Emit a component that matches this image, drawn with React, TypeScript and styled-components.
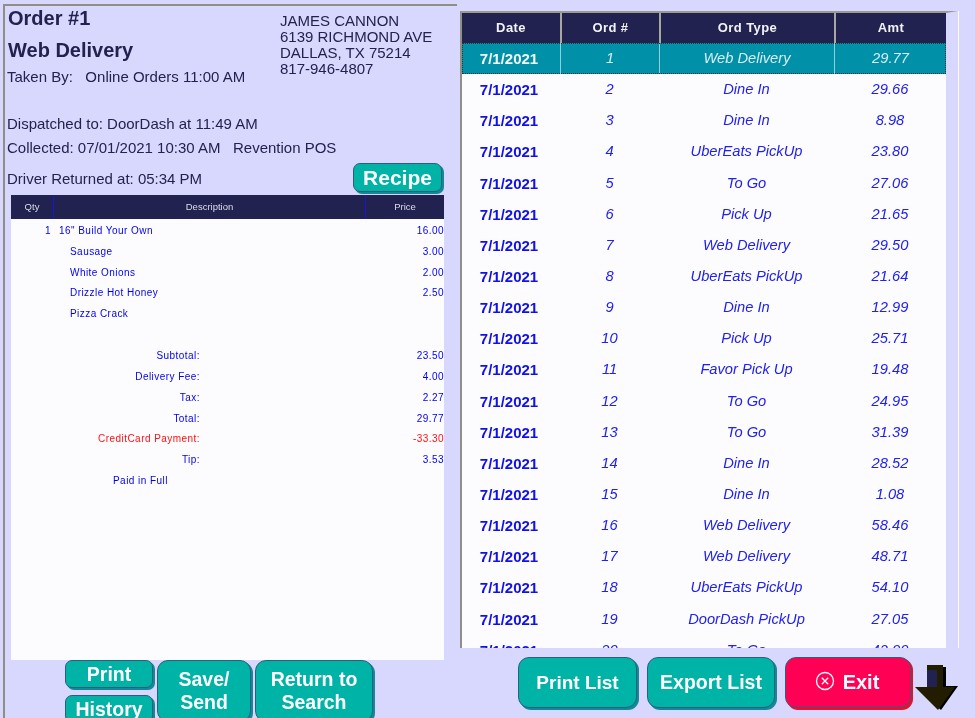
import React from 'react'
import styled, { createGlobalStyle } from 'styled-components'

const LAVENDER = '#d8d8ff'
const NAVY = '#222250'
const TEAL = '#00b3a7'
const BLUE = '#0000f0'

const GlobalStyle = createGlobalStyle`
  html, body {
    margin: 0;
    padding: 0;
    background: ${LAVENDER};
    font-family: "Liberation Sans", Arial, sans-serif;
  }
`

const Screen = styled.div`
  width: 975px;
  height: 718px;
  overflow: hidden;
  display: grid;
  grid-template-columns: 457px 518px;
  background: ${LAVENDER};
  filter: blur(0.35px);
`

const LeftPanel = styled.div`
  height: 714px;
  margin: 4px 0 0 3px;
  border-top: 2px solid #8f8f86;
  border-left: 2px solid #8f8f86;
  box-sizing: border-box;
  padding: 0 0 0 2px;
  display: flex;
  flex-direction: column;

  > * {
    flex: none;
  }
`

const TopInfo = styled.div`
  height: 85px;
  display: flex;
  color: ${NAVY};
`

const Titles = styled.div`
  width: 272px;
  padding-left: 1px;
`

const OrderTitle = styled.div`
  font-size: 20px;
  font-weight: 700;
  line-height: 24px;
`

const TypeTitle = styled.div`
  font-size: 20px;
  font-weight: 700;
  line-height: 24px;
  margin-top: 8px;
`

const Address = styled.div`
  font-size: 15px;
  line-height: 16px;
  padding-top: 7px;
`

const InfoLine = styled.div<{ $top?: number; $bottom?: number; $left?: number }>`
  font-size: 15px;
  line-height: 16px;
  color: ${NAVY};
  margin-top: ${props => props.$top ?? 0}px;
  margin-bottom: ${props => props.$bottom ?? 0}px;
  margin-left: ${props => props.$left ?? 0}px;
  white-space: pre;
`

const DriverRow = styled.div`
  display: flex;
  align-items: flex-end;
  justify-content: space-between;
  height: 40px;
  margin-top: -1px;
  padding-bottom: 3px;
  box-sizing: border-box;
  width: 435px;
`

const Button = styled.div<{ $w: number; $h: number; $size: number; $red?: boolean }>`
  width: ${props => props.$w}px;
  height: ${props => props.$h}px;
  flex: none;
  box-sizing: border-box;
  border-radius: ${props => (props.$h > 40 ? 11 : 7)}px;
  border: 1px solid #2e5f78;
  background: ${props => (props.$red ? '#ff0055' : TEAL)};
  box-shadow: 2px 2px 0 ${props => (props.$red ? '#e8102a' : '#12889a')};
  color: #fff;
  font-size: ${props => props.$size}px;
  font-weight: 700;
  line-height: 23px;
  display: flex;
  align-items: center;
  justify-content: center;
  text-align: center;
`

const Receipt = styled.div`
  width: 433px;
  height: 465px;
  margin-left: 4px;
  background: #fcfcff;
  color: ${BLUE};
`

const ReceiptHead = styled.div`
  display: grid;
  grid-template-columns: 42px 312px 79px;
  height: 24px;
  background: ${NAVY};
  color: #dcdcec;
  font-size: 9.5px;
  line-height: 24px;
  text-align: center;
  margin-bottom: 1px;
`

const HeadCell = styled.div`
  border-left: 1px solid #1818d0;
  &:first-child {
    border-left: 0;
  }
`

const ReceiptRow = styled.div<{ $red?: boolean }>`
  height: 20.85px;
  display: flex;
  align-items: center;
  font-size: 10px;
  letter-spacing: 0.45px;
  color: ${props => (props.$red ? '#ff1010' : BLUE)};
`

const Qty = styled.div`
  width: 40px;
  text-align: right;
  flex: none;
`

const Item = styled.div<{ $indent: number }>`
  margin-left: ${props => props.$indent}px;
  flex: 1;
`

const TotalLabel = styled.div`
  width: 189px;
  text-align: right;
  flex: none;
`

const RowAmt = styled.div`
  margin-left: auto;
  text-align: right;
`

const LeftButtons = styled.div`
  display: flex;
  gap: 4px;
  margin-left: 58px;
`

const StackedButtons = styled.div`
  display: flex;
  flex-direction: column;
  gap: 7px;
`

const RightPanel = styled.div`
  display: flex;
  flex-direction: column;
  padding: 11px 0 0 3px;
`

const TableFrame = styled.div`
  width: 498px;
  height: 637px;
  box-sizing: border-box;
  overflow: hidden;
  border-top: 2px solid #9a9a92;
  border-left: 2px solid #8f8f86;
  border-right: 12px solid ${LAVENDER};
  background: #fcfcff;
  box-shadow: 1px 0 0 #fcfcff;
`

const TableRow = styled.div<{ $selected?: boolean }>`
  display: grid;
  grid-template-columns: 98px 99px 175px 112px;
  height: 31.15px;
  align-items: center;
  text-align: center;
  box-sizing: border-box;
  color: ${props => (props.$selected ? '#d8eef2' : '#2020f0')};
  background: ${props => (props.$selected ? '#0090a8' : 'transparent')};
  outline: ${props => (props.$selected ? '1px dotted #333' : 'none')};
  outline-offset: -1px;
`

const HeaderRow = styled.div`
  display: grid;
  grid-template-columns: 98px 99px 175px 112px;
  height: 30px;
  background: ${NAVY};
  color: #f2f2f8;
  font-size: 13px;
  font-weight: 700;
  line-height: 30px;
  letter-spacing: 0.4px;
  text-align: center;
`

const HeaderCell = styled.div`
  border-left: 2px solid #a8a8a0;
  &:first-child {
    border-left: 0;
  }
`

const DateCell = styled.div<{ $selected?: boolean }>`
  font-size: 15px;
  font-weight: 700;
  padding-right: 4px;
  color: ${props => (props.$selected ? '#f2fafa' : '#1010e8')};
`

const TextCell = styled.div<{ $selected?: boolean }>`
  font-size: 14.7px;
  font-style: italic;
  line-height: 31px;
  height: 100%;
  border-left: ${props => (props.$selected ? '1px solid #8fd0dc' : '0')};
`

const ListButtons = styled.div`
  display: flex;
  align-items: flex-start;
  margin-top: 9px;
  padding-left: 58px;
  gap: 10px;
`

const ExitMark = styled.svg`
  margin: 0 8px 4px -2px;
`

const DownArrow = styled.svg`
  margin: 8px 0 0 -6px;
  flex: none;
`

const items = [
  { name: 'Sausage', amt: '3.00' },
  { name: 'White Onions', amt: '2.00' },
  { name: 'Drizzle Hot Honey', amt: '2.50' },
  { name: 'Pizza Crack', amt: '' },
]

const totals = [
  { label: 'Subtotal:', amt: '23.50' },
  { label: 'Delivery Fee:', amt: '4.00' },
  { label: 'Tax:', amt: '2.27' },
  { label: 'Total:', amt: '29.77' },
  { label: 'CreditCard Payment:', amt: '-33.30', red: true },
  { label: 'Tip:', amt: '3.53' },
]

const orders = [
  ['1', 'Web Delivery', '29.77'],
  ['2', 'Dine In', '29.66'],
  ['3', 'Dine In', '8.98'],
  ['4', 'UberEats PickUp', '23.80'],
  ['5', 'To Go', '27.06'],
  ['6', 'Pick Up', '21.65'],
  ['7', 'Web Delivery', '29.50'],
  ['8', 'UberEats PickUp', '21.64'],
  ['9', 'Dine In', '12.99'],
  ['10', 'Pick Up', '25.71'],
  ['11', 'Favor Pick Up', '19.48'],
  ['12', 'To Go', '24.95'],
  ['13', 'To Go', '31.39'],
  ['14', 'Dine In', '28.52'],
  ['15', 'Dine In', '1.08'],
  ['16', 'Web Delivery', '58.46'],
  ['17', 'Web Delivery', '48.71'],
  ['18', 'UberEats PickUp', '54.10'],
  ['19', 'DoorDash PickUp', '27.05'],
  ['20', 'To Go', '42.00'],
]

const App = () => (
  <Screen>
    <GlobalStyle />
    <LeftPanel>
      <TopInfo>
        <Titles>
          <OrderTitle>Order #1</OrderTitle>
          <TypeTitle>Web Delivery</TypeTitle>
          <InfoLine $top={7} $left={-1}>{'Taken By:   Online Orders 11:00 AM'}</InfoLine>
        </Titles>
        <Address>
          JAMES CANNON
          <br />
          6139 RICHMOND AVE
          <br />
          DALLAS, TX 75214
          <br />
          817-946-4807
        </Address>
      </TopInfo>
      <InfoLine $top={25}>Dispatched to: DoorDash at 11:49 AM</InfoLine>
      <InfoLine $top={8}>{'Collected: 07/01/2021 10:30 AM   Revention POS'}</InfoLine>
      <DriverRow>
        <InfoLine $bottom={5}>Driver Returned at: 05:34 PM</InfoLine>
        <Button $w={89} $h={29} $size={21}>Recipe</Button>
      </DriverRow>
      <Receipt>
        <ReceiptHead>
          <HeadCell>Qty</HeadCell>
          <HeadCell>Description</HeadCell>
          <HeadCell>Price</HeadCell>
        </ReceiptHead>
        <ReceiptRow>
          <Qty>1</Qty>
          <Item $indent={8}>16" Build Your Own</Item>
          <RowAmt>16.00</RowAmt>
        </ReceiptRow>
        {items.map(item => (
          <ReceiptRow key={item.name}>
            <Item $indent={59}>{item.name}</Item>
            <RowAmt>{item.amt}</RowAmt>
          </ReceiptRow>
        ))}
        <ReceiptRow />
        {totals.map(total => (
          <ReceiptRow key={total.label} $red={total.red}>
            <TotalLabel>{total.label}</TotalLabel>
            <RowAmt>{total.amt}</RowAmt>
          </ReceiptRow>
        ))}
        <ReceiptRow>
          <Item $indent={102}>Paid in Full</Item>
        </ReceiptRow>
      </Receipt>
      <LeftButtons>
        <StackedButtons>
          <Button $w={88} $h={28} $size={19.5}>Print</Button>
          <Button $w={88} $h={28} $size={19.5}>History</Button>
        </StackedButtons>
        <Button $w={94} $h={62} $size={19.5}>
          Save/
          <br />
          Send
        </Button>
        <Button $w={118} $h={62} $size={19.5}>
          Return to
          <br />
          Search
        </Button>
      </LeftButtons>
    </LeftPanel>
    <RightPanel>
      <TableFrame>
        <HeaderRow>
          <HeaderCell>Date</HeaderCell>
          <HeaderCell>Ord #</HeaderCell>
          <HeaderCell>Ord Type</HeaderCell>
          <HeaderCell>Amt</HeaderCell>
        </HeaderRow>
        {orders.map(([num, type, amt], index) => (
          <TableRow key={num} $selected={index === 0}>
            <DateCell $selected={index === 0}>7/1/2021</DateCell>
            <TextCell $selected={index === 0}>{num}</TextCell>
            <TextCell $selected={index === 0}>{type}</TextCell>
            <TextCell $selected={index === 0}>{amt}</TextCell>
          </TableRow>
        ))}
      </TableFrame>
      <ListButtons>
        <Button $w={119} $h={51} $size={19}>Print List</Button>
        <Button $w={128} $h={51} $size={19.5}>Export List</Button>
        <Button $w={126} $h={51} $size={20} $red>
          <ExitMark width="20" height="20" viewBox="0 0 20 20" fill="none" stroke="#fff" strokeWidth="1.3">
            <circle cx="10" cy="10" r="8.5" />
            <path d="M6.8 6.8 13.2 13.2M13.2 6.8 6.8 13.2" />
          </ExitMark>
          Exit
        </Button>
        <DownArrow width="43" height="45" viewBox="0 0 43 45">
          <path d="M15 2H31V21H43L26 45 3 24H15Z" fill="#000" />
          <path d="M12 0H28V22H40L23 45 0 22H12Z" fill="#221c00" />
          <rect x="12" y="5" width="10" height="17" fill="#222250" />
        </DownArrow>
      </ListButtons>
    </RightPanel>
  </Screen>
)

export default App
